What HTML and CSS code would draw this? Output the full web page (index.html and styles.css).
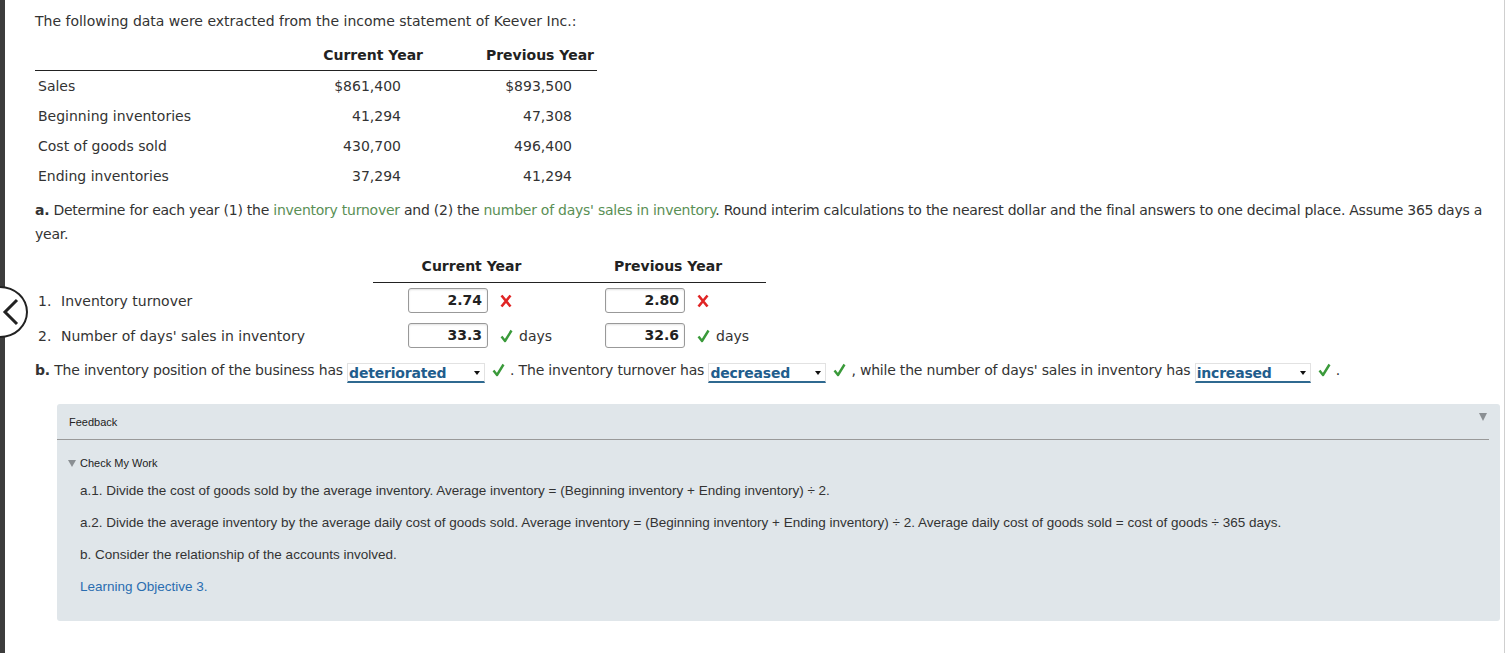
FILE: index.html
```html
<!DOCTYPE html>
<html>
<head>
<meta charset="utf-8">
<link rel="stylesheet" href="styles.css">
</head>
<body>
<div class="page">
  <div class="rail"></div>
  <main class="content">
    <p class="intro">The following data were extracted from the income statement of Keever Inc.:</p>
    <div class="data-table">
      <div class="th"></div>
      <div class="th hc">Current Year</div>
      <div class="th hc">Previous Year</div>
      <div class="td">Sales</div><div class="td num">$861,400</div><div class="td num">$893,500</div>
      <div class="td">Beginning inventories</div><div class="td num">41,294</div><div class="td num">47,308</div>
      <div class="td">Cost of goods sold</div><div class="td num">430,700</div><div class="td num">496,400</div>
      <div class="td">Ending inventories</div><div class="td num">37,294</div><div class="td num">41,294</div>
    </div>
    <p class="question"><b>a.</b> Determine for each year (1) the <span class="term">inventory turnover</span> and (2) the <span class="term">number of days' sales in inventory</span>. Round interim calculations to the nearest dollar and the final answers to one decimal place. Assume 365 days a year.</p>
    <div class="answer-table">
      <div class="ah"></div>
      <div class="ah ahc">Current Year</div>
      <div class="ah ahc">Previous Year</div>

      <div class="ar label"><span class="num-label">1.</span>Inventory turnover</div>
      <div class="ar cell"><span class="box">2.74</span><svg class="mark" width="12" height="14" viewBox="0 0 12 14"><path d="M1.5 1.5 L10.5 12.5 M10.5 1.5 L1.5 12.5" stroke="#e02424" stroke-width="2.6" stroke-linecap="butt"/></svg></div>
      <div class="ar cell"><span class="box">2.80</span><svg class="mark" width="12" height="14" viewBox="0 0 12 14"><path d="M1.5 1.5 L10.5 12.5 M10.5 1.5 L1.5 12.5" stroke="#e02424" stroke-width="2.6" stroke-linecap="butt"/></svg></div>

      <div class="ar label"><span class="num-label">2.</span>Number of days' sales in inventory</div>
      <div class="ar cell"><span class="box">33.3</span><svg class="mark" width="13" height="14" viewBox="0 0 13 14"><path d="M1.5 7.5 L5 12 L11.5 1.5" stroke="#3a9a3a" stroke-width="2.4" fill="none" stroke-linejoin="round"/></svg><span class="unit">days</span></div>
      <div class="ar cell"><span class="box">32.6</span><svg class="mark" width="13" height="14" viewBox="0 0 13 14"><path d="M1.5 7.5 L5 12 L11.5 1.5" stroke="#3a9a3a" stroke-width="2.4" fill="none" stroke-linejoin="round"/></svg><span class="unit">days</span></div>
    </div>
    <p class="part-b"><b>b.</b> The inventory position of the business has <span class="select w1">deteriorated<span class="arrow"></span></span><svg class="mark mb" width="13" height="14" viewBox="0 0 13 14"><path d="M1.5 7.5 L5 12 L11.5 1.5" stroke="#3a9a3a" stroke-width="2.4" fill="none" stroke-linejoin="round"/></svg>. The inventory turnover has <span class="select w2">decreased<span class="arrow"></span></span><svg class="mark mb" width="13" height="14" viewBox="0 0 13 14"><path d="M1.5 7.5 L5 12 L11.5 1.5" stroke="#3a9a3a" stroke-width="2.4" fill="none" stroke-linejoin="round"/></svg>, while the number of days' sales in inventory has <span class="select w3">increased<span class="arrow"></span></span><svg class="mark mb" width="13" height="14" viewBox="0 0 13 14"><path d="M1.5 7.5 L5 12 L11.5 1.5" stroke="#3a9a3a" stroke-width="2.4" fill="none" stroke-linejoin="round"/></svg>.</p>

    <section class="feedback">
      <div class="fb-head"><span>Feedback</span><span class="fb-toggle"></span></div>
      <div class="fb-sub"><span class="fb-tri"></span>Check My Work</div>
      <p class="fb-item">a.1. Divide the cost of goods sold by the average inventory. Average inventory = (Beginning inventory + Ending inventory) ÷ 2.</p>
      <p class="fb-item">a.2. Divide the average inventory by the average daily cost of goods sold. Average inventory = (Beginning inventory + Ending inventory) ÷ 2. Average daily cost of goods sold = cost of goods ÷ 365 days.</p>
      <p class="fb-item">b. Consider the relationship of the accounts involved.</p>
      <p class="fb-item link">Learning Objective 3.</p>
    </section>
  </main>
  <div class="edge"></div>
  <div class="nav-circle"><svg width="20" height="30" viewBox="0 0 20 30"><path d="M15 3 L3 15 L15 27" stroke="#222" stroke-width="3" fill="none"/></svg></div>
</div>
</body>
</html>
```

FILE: styles.css
```css
html, body {
  margin: 0;
  padding: 0;
  background: #fff;
}
body {
  font-family: "DejaVu Sans", Verdana, sans-serif;
  font-size: 14px;
  color: #333;
}
.page {
  position: relative;
  display: flex;
  width: 1508px;
  height: 653px;
  overflow: hidden;
}
.rail {
  width: 5px;
  background: #3c3c3c;
  flex: none;
}
.content {
  flex: none;
  width: 1465px;
  padding: 11px 0 0 30px;
}
.edge {
  flex: none;
  width: 1px;
  margin-left: 4px;
  background: #cfcfcf;
}
p { margin: 0; }
.intro {
  line-height: 20px;
}
.data-table {
  display: grid;
  grid-template-columns: 220px 171px 171px;
}
.th {
  padding: 14px 3px 5px 0;
  line-height: 20px;
  font-weight: bold;
  color: #222;
  border-bottom: 1px solid #222;
}
.hc { text-align: right; }
.td {
  line-height: 30px;
  padding-left: 3px;
}
.num {
  text-align: right;
  padding-right: 25px;
}
.question {
  margin-top: 7px;
  line-height: 24px;
  letter-spacing: -0.25px;
}
.term { color: #5a8f55; }
.answer-table {
  display: grid;
  grid-template-columns: 338px 197px 196px;
}
.ah {
  padding: 10px 0 6px;
  line-height: 20px;
  font-weight: bold;
  color: #222;
  border-bottom: 1px solid #222;
}
.ah:first-child { border-bottom: none; }
.ahc { text-align: center; }
.ar {
  height: 35px;
  display: flex;
  align-items: center;
}
.label { padding-left: 3px; }
.num-label { width: 23px; }
.cell { padding-left: 35px; }
.box {
  box-sizing: border-box;
  width: 80px;
  height: 25px;
  border: 1px solid #999;
  border-radius: 3px;
  box-shadow: inset 0 1px 2px rgba(0,0,0,0.12);
  text-align: right;
  padding-right: 5px;
  line-height: 23px;
  font-weight: bold;
  color: #222;
}
.mark { margin-left: 12px; }
.unit { margin-left: 6px; }
.part-b {
  line-height: 35px;
  height: 35px;
  white-space: nowrap;
  letter-spacing: -0.2px;
}
.select {
  display: inline-block;
  position: relative;
  box-sizing: border-box;
  height: 20px;
  line-height: 18px;
  padding-left: 1px;
  border: 1px solid #e2e2e2;
  border-bottom: 2px solid #2f6990;
  font-weight: bold;
  color: #1f5d8d;
  vertical-align: -3px;
}
.w1 { width: 138px; }
.w2 { width: 118px; }
.w3 { width: 116px; }
.arrow {
  position: absolute;
  right: 4px;
  top: 7px;
  width: 0;
  height: 0;
  border-left: 3px solid transparent;
  border-right: 3px solid transparent;
  border-top: 4px solid #111;
}
.mb { margin: 0 5px 0 7px; vertical-align: -2px; }
.feedback {
  margin: 16px 0 0 22px;
  width: 1443px;
  height: 217px;
  box-sizing: border-box;
  background: #e0e6ea;
  border-radius: 3px;
  font-family: "Liberation Sans", Arial, sans-serif;
  color: #333;
}
.fb-head {
  display: flex;
  justify-content: space-between;
  align-items: flex-start;
  margin-right: 11px;
  padding: 11px 0 10px 12px;
  line-height: 14px;
  font-size: 11px;
  color: #222;
  border-bottom: 1px solid #999;
}
.fb-toggle {
  width: 0;
  height: 0;
  margin: -2px 2px 0 0;
  border-left: 4px solid transparent;
  border-right: 4px solid transparent;
  border-top: 8px solid #8a8f93;
}
.fb-sub {
  display: flex;
  align-items: center;
  padding: 16px 0 0 11px;
  line-height: 14px;
  font-size: 11px;
  color: #222;
}
.fb-tri {
  width: 0;
  height: 0;
  margin-right: 4px;
  border-left: 4px solid transparent;
  border-right: 4px solid transparent;
  border-top: 7px solid #8a8f93;
}
.fb-item {
  padding-left: 23px;
  font-size: 13.5px;
  line-height: 32px;
}
.fb-sub + .fb-item { margin-top: 5px; }
.link { color: #2a6db0; }
.nav-circle {
  position: absolute;
  left: -28px;
  top: 286px;
  width: 48px;
  height: 48px;
  border: 2.5px solid #222;
  border-radius: 50%;
  background: #fff;
  display: flex;
  align-items: center;
  justify-content: flex-end;
  padding-right: 4px;
  box-sizing: content-box;
}
```
